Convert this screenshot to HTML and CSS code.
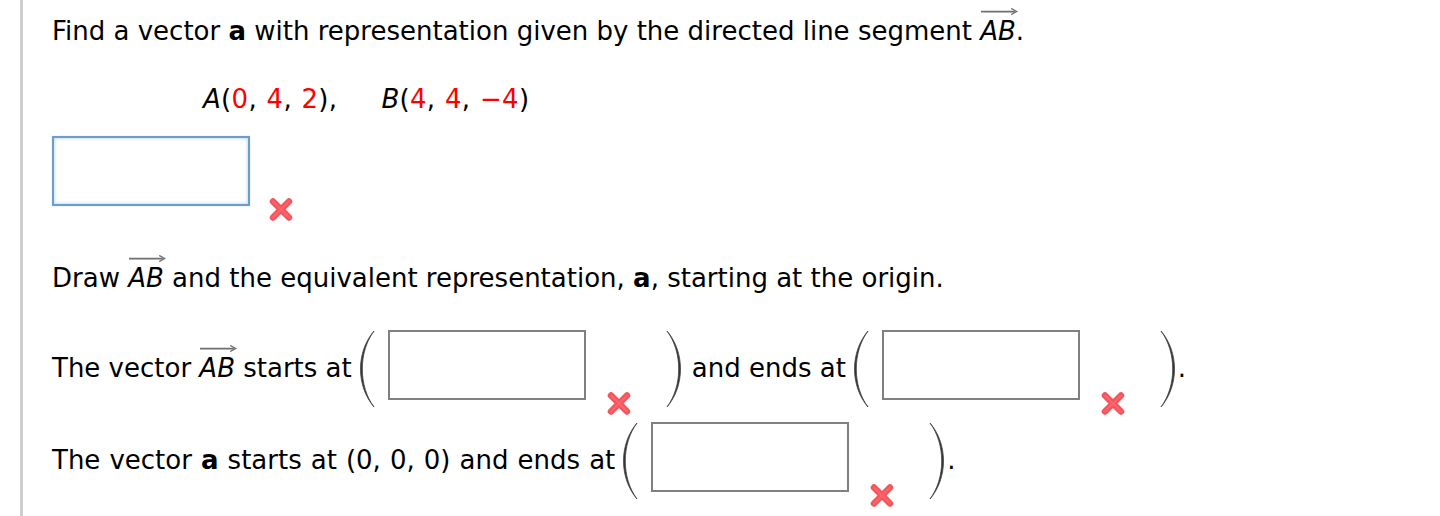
FILE: index.html
```html
<!DOCTYPE html>
<html>
<head>
<meta charset="utf-8">
<link rel="stylesheet" href="styles.css">
</head>
<body>
<div class="page">
  <p class="line q1">Find a vector <b>a</b> with representation given by the directed line segment <span class="vec"><i>AB</i><svg class="arrow" viewBox="0 0 40 8" preserveAspectRatio="none"><path d="M0 4 H37" stroke="#6f6f6f" stroke-width="2"/><path d="M33 0.5 L39 4 L33 7.5" fill="none" stroke="#6f6f6f" stroke-width="1.5"/></svg></span>.</p>
  <p class="line pts"><i>A</i>(<span class="r">0</span>, <span class="r">4</span>, <span class="r">2</span>),<span class="sp"></span><i>B</i>(<span class="r">4</span>, <span class="r">4</span>, <span class="r">−4</span>)</p>
  <div class="ans first">
    <span class="box active"></span>
    <svg class="x" viewBox="0 0 26 25"><path d="M5 4.5 L21 20.5 M21 4.5 L5 20.5" stroke="#f5545c" stroke-width="6.5" stroke-linecap="round"/><path d="M5 4.5 L21 20.5 M21 4.5 L5 20.5" stroke="#ff7278" stroke-width="2" stroke-linecap="round" opacity="0.6"/></svg>
  </div>
  <p class="line draw">Draw <span class="vec"><i>AB</i><svg class="arrow" viewBox="0 0 40 8" preserveAspectRatio="none"><path d="M0 4 H37" stroke="#6f6f6f" stroke-width="2"/><path d="M33 0.5 L39 4 L33 7.5" fill="none" stroke="#6f6f6f" stroke-width="1.5"/></svg></span> and the equivalent representation, <b>a</b>, starting at the origin.</p>
  <div class="row r1">
    <span class="txt">The vector <span class="vec"><i>AB</i><svg class="arrow" viewBox="0 0 40 8" preserveAspectRatio="none"><path d="M0 4 H37" stroke="#6f6f6f" stroke-width="2"/><path d="M33 0.5 L39 4 L33 7.5" fill="none" stroke="#6f6f6f" stroke-width="1.5"/></svg></span> starts at</span>
    <svg class="paren lp" viewBox="0 0 16 78"><path d="M15 1 C-3 22 -3 56 15 77 C-0.6 56 -0.6 22 15 1 Z" fill="#333" stroke="#444" stroke-width="0.8"/></svg>
    <span class="ans">
      <span class="box"></span>
      <svg class="x" viewBox="0 0 26 25"><path d="M5 4.5 L21 20.5 M21 4.5 L5 20.5" stroke="#f5545c" stroke-width="6.5" stroke-linecap="round"/><path d="M5 4.5 L21 20.5 M21 4.5 L5 20.5" stroke="#ff7278" stroke-width="2" stroke-linecap="round" opacity="0.6"/></svg>
    </span>
    <svg class="paren rp" viewBox="0 0 16 78"><path d="M1 1 C19 22 19 56 1 77 C16.6 56 16.6 22 1 1 Z" fill="#333" stroke="#444" stroke-width="0.8"/></svg>
    <span class="txt mid">and ends at</span>
    <svg class="paren lp" viewBox="0 0 16 78"><path d="M15 1 C-3 22 -3 56 15 77 C-0.6 56 -0.6 22 15 1 Z" fill="#333" stroke="#444" stroke-width="0.8"/></svg>
    <span class="ans">
      <span class="box"></span>
      <svg class="x" viewBox="0 0 26 25"><path d="M5 4.5 L21 20.5 M21 4.5 L5 20.5" stroke="#f5545c" stroke-width="6.5" stroke-linecap="round"/><path d="M5 4.5 L21 20.5 M21 4.5 L5 20.5" stroke="#ff7278" stroke-width="2" stroke-linecap="round" opacity="0.6"/></svg>
    </span>
    <svg class="paren rp end" viewBox="0 0 16 78"><path d="M1 1 C19 22 19 56 1 77 C16.6 56 16.6 22 1 1 Z" fill="#333" stroke="#444" stroke-width="0.8"/></svg>
    <span class="txt dot">.</span>
  </div>
  <div class="row r2">
    <span class="txt wide">The vector <b>a</b> starts at (0, 0, 0) and ends at</span>
    <svg class="paren lp" viewBox="0 0 16 78"><path d="M15 1 C-3 22 -3 56 15 77 C-0.6 56 -0.6 22 15 1 Z" fill="#333" stroke="#444" stroke-width="0.8"/></svg>
    <span class="ans">
      <span class="box"></span>
      <svg class="x" viewBox="0 0 26 25"><path d="M5 4.5 L21 20.5 M21 4.5 L5 20.5" stroke="#f5545c" stroke-width="6.5" stroke-linecap="round"/><path d="M5 4.5 L21 20.5 M21 4.5 L5 20.5" stroke="#ff7278" stroke-width="2" stroke-linecap="round" opacity="0.6"/></svg>
    </span>
    <svg class="paren rp end" viewBox="0 0 16 78"><path d="M1 1 C19 22 19 56 1 77 C16.6 56 16.6 22 1 1 Z" fill="#333" stroke="#444" stroke-width="0.8"/></svg>
    <span class="txt dot">.</span>
  </div>
</div>
</body>
</html>
```

FILE: styles.css
```css
html, body {
  margin: 0;
  padding: 0;
  background: #fff;
}
body {
  font-family: "DejaVu Sans", Verdana, sans-serif;
  font-size: 26px;
  color: #000;
  height: 516px;
  overflow: hidden;
}
.page {
  margin-left: 20px;
  border-left: 3px solid #cfcfcf;
  padding-left: 29px;
  padding-top: 16px;
  min-height: 516px;
  box-sizing: border-box;
  display: flex;
  flex-direction: column;
  align-items: flex-start;
}
.line {
  margin: 0;
  line-height: 30px;
  white-space: nowrap;
}
.pts {
  margin-top: 38px;
  padding-left: 151px;
  word-spacing: 1px;
  letter-spacing: 0.3px;
}
.r { color: #f00; }
.sp { display: inline-block; width: 44px; }
.vec {
  position: relative;
  display: inline-block;
}
.vec .arrow {
  position: absolute;
  left: 1px;
  top: -8px;
  width: calc(100% + 1px);
  height: 7px;
}
.ans {
  display: flex;
  align-items: flex-end;
}
.ans.first {
  margin-top: 22px;
}
.box {
  display: block;
  width: 198px;
  height: 70px;
  box-sizing: border-box;
  border: 2px solid #808080;
  background: #fff;
}
.box.active {
  border-color: #6d9dca;
  box-shadow: inset 0 0 3px 1px #c9def3, 0 0 1px #a9c6e4;
}
.x {
  display: block;
  width: 26px;
  height: 25px;
  margin-left: 18px;
  margin-bottom: -16px;
  flex: none;
}
.row .x { margin-left: 20px; }
.draw {
  margin-top: 57px;
}
.row {
  display: flex;
  align-items: flex-start;
  height: 78px;
  white-space: nowrap;
  line-height: 30px;
}
.r1 { margin-top: 37px; }
.r2 { margin-top: 14px; }
.txt { display: block; padding-top: 23px; }
.txt.wide { word-spacing: 0.8px; }
.paren {
  display: block;
  width: 16px;
  height: 78px;
  flex: none;
}
.lp { margin-left: 7px; margin-right: 13px; }
.rp { margin-left: 34px; margin-right: 10px; }
.rp.end { margin-right: 2px; }
```
